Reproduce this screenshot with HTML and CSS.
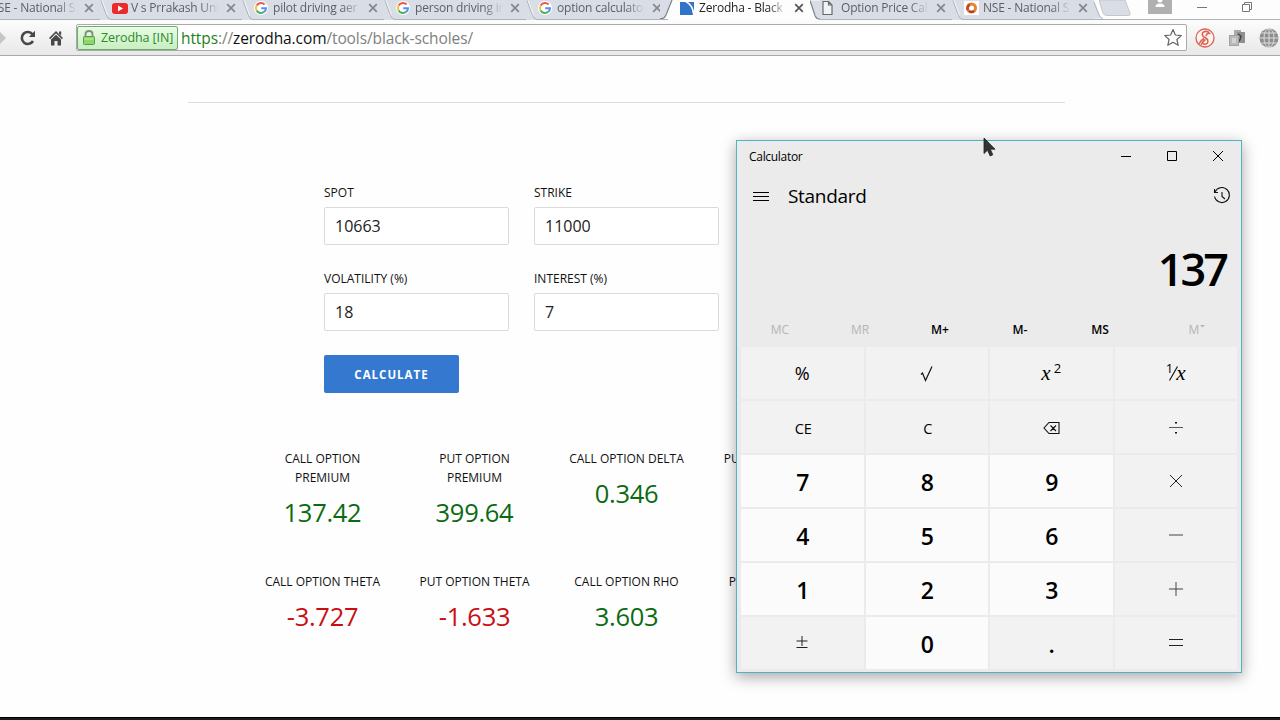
FILE: index.html
```html
<!DOCTYPE html>
<html lang="en">
<head>
    <meta charset="UTF-8">
    <meta name="viewport" content="width=device-width, initial-scale=1.0">
    <title>Zerodha - Black Scholes</title>
    <link rel="stylesheet" href="styles.css">
</head>
<body>

    <!-- Shared icons -->
    <svg class="sprite" width="0" height="0">
        <symbol id="edge" viewBox="0 0 10 19">
            <path d="M0 0 L6 14 Q8 19 10 19 V0 Z" fill="#d9dde5"/>
            <path d="M1 0 L6.500 15 Q8 18.500 10 18.500" fill="none" stroke="#aeb2b9"/>
            <path d="M2.200 0 L7.500 14.500" fill="none" stroke="#f3f4f6"/>
        </symbol>
        <symbol id="cross" viewBox="0 0 10 10">
            <path d="M1.200 1.200 L8.800 8.800 M8.800 1.200 L1.200 8.800" fill="none" stroke="currentColor" stroke-width="1.700"/>
        </symbol>
        <symbol id="google" viewBox="0 0 14 14">
            <circle cx="7" cy="7" r="7" fill="#fff"/>
            <path d="M2.600 4.500 A5 5 0 0 1 10.600 3.500" fill="none" stroke="#ea5a4b" stroke-width="2"/>
            <path d="M2.600 4.500 A5 5 0 0 0 2.600 9.500" fill="none" stroke="#f6c244" stroke-width="2"/>
            <path d="M2.600 9.500 A5 5 0 0 0 10.200 10.800" fill="none" stroke="#4cae62" stroke-width="2"/>
            <path d="M10.200 10.800 Q12 9.300 12 7.200 H7.200" fill="none" stroke="#5a8ff0" stroke-width="2"/>
        </symbol>
    </svg>

    <!-- Tabs -->
    <div class="tabs">
        <div class="tab first">
            <svg class="edge"><use href="#edge"/></svg>
            <span class="favicon"></span>
            <span class="title">NSE - National S</span>
            <svg class="close"><use href="#cross"/></svg>
        </div>
        <div class="tab">
            <svg class="edge"><use href="#edge"/></svg>
            <svg class="favicon" viewBox="0 0 16 14"><rect y="2" width="16" height="11" rx="3" fill="#ec2a2c"/><path d="M6 4.500 L11 7.500 L6 10.500 Z" fill="#fff"/></svg>
            <span class="title">V s Prrakash Uni</span>
            <svg class="close"><use href="#cross"/></svg>
        </div>
        <div class="tab">
            <svg class="edge"><use href="#edge"/></svg>
            <svg class="favicon google"><use href="#google"/></svg>
            <span class="title">pilot driving aer</span>
            <svg class="close"><use href="#cross"/></svg>
        </div>
        <div class="tab">
            <svg class="edge"><use href="#edge"/></svg>
            <svg class="favicon google"><use href="#google"/></svg>
            <span class="title">person driving in</span>
            <svg class="close"><use href="#cross"/></svg>
        </div>
        <div class="tab">
            <svg class="edge"><use href="#edge"/></svg>
            <svg class="favicon google"><use href="#google"/></svg>
            <span class="title">option calculato</span>
            <svg class="close"><use href="#cross"/></svg>
        </div>
        <div class="tab active">
            <svg class="edge" viewBox="0 0 10 19"></svg>
            <svg class="favicon" viewBox="0 0 16 14"><path d="M0 1 H5 Q12 4 13 14 H0 Z" fill="#2f74c9"/><path d="M8 1 H14 V10 Q12.500 4 8 1 Z" fill="#2f74c9"/></svg>
            <span class="title">Zerodha - Black</span>
            <svg class="close"><use href="#cross"/></svg>
            <svg class="slant" width="13" height="19"><path d="M0 0 H12 L6 15 Q4.500 18.500 2 18.500 H0 Z" fill="#d9dde5"/><path d="M12 0 H13 V19 H0 V18.500 H2 Q4.500 18.500 6 15 Z" fill="#fdfdfd"/><path d="M0 18.500 H2 Q4.500 18.500 6 15 L12 0" fill="none" stroke="#7d8188" stroke-width="1.200"/></svg>
        </div>
        <div class="tab after">
            <svg class="edge" viewBox="0 0 10 19"><path d="M0 0 L6 16 Q7 19 10 19 V0 Z" fill="#d9dde5"/><path d="M0 0 L5 15 Q6.500 18.500 9 18.500 H10" fill="none" stroke="#7d8188" stroke-width="1.200"/></svg>
            <svg class="favicon" viewBox="0 0 16 14"><path d="M1 .5 H6.500 L10 4 V13.500 H1 Z M6.500 .5 V4 H10" fill="#f2f3f5" stroke="#686b70" stroke-width="1.200"/></svg>
            <span class="title">Option Price Cal</span>
            <svg class="close"><use href="#cross"/></svg>
        </div>
        <div class="tab">
            <svg class="edge"><use href="#edge"/></svg>
            <svg class="favicon" viewBox="0 0 16 14"><path d="M0 0 H15 V14 H0 Z" fill="#fff"/><circle cx="7.500" cy="7" r="4" fill="none" stroke="#e9842c" stroke-width="3"/><path d="M4 9 A4 4 0 0 1 6 3.500" fill="none" stroke="#c1443c" stroke-width="2.500"/><path d="M5 10 A4 4 0 0 0 10 10" fill="none" stroke="#9b3b55" stroke-width="2"/></svg>
            <span class="title">NSE - National S</span>
            <svg class="close"><use href="#cross"/></svg>
        </div>
        <svg class="last-edge" width="10" height="19"><path d="M0 0 L6 16 Q7 18.500 9 18.500 H0 Z" fill="#d9dde5"/><path d="M-1 0 L5 15 Q6.500 18.500 9 18.500" fill="none" stroke="#b2b5ba"/></svg>
        <svg class="new-tab" width="34" height="19"><path d="M0 0 H26 L31 13 Q32 15.500 29 15.500 H8 Q5 15.500 4 13 Z" fill="#d9dde5" stroke="#c3c6cb"/></svg>
        <div class="window-buttons">
            <svg width="24" height="14"><path d="M0 0 H24 V14 H0 Z" fill="#b0b0b0"/><circle cx="12" cy="0" r="2.500" fill="#fff"/><path d="M7.500 7 Q7.500 3.500 12 3.500 Q16.500 3.500 16.500 7 Z" fill="#fff"/></svg>
            <svg width="10" height="14"><path d="M0 7.500 H10" stroke="#777"/></svg>
            <svg width="11" height="14"><path d="M.5 4.500 H7.500 V11.500 H.5 Z M2.500 4.500 V2.500 H9.500 V9.500 H7.500" fill="none" stroke="#777"/></svg>
        </div>
    </div>

    <!-- Address bar -->
    <div class="toolbar">
        <svg class="forward" width="6" height="14"><path d="M0 1 L6 7 L0 13 Z" fill="#c6c6c6"/></svg>
        <svg class="reload" width="16" height="16" viewBox="0 0 16 16"><path d="M13 11 A6 6 0 1 1 12.500 4.200" fill="none" stroke="#484848" stroke-width="2.600"/><path d="M15 .8 V7 H8.800 Z" fill="#484848"/></svg>
        <svg class="home" width="16" height="16" viewBox="0 0 16 16"><path d="M8 1 L15 8 L13.900 9.200 L8 3.300 L2.100 9.200 L1 8 Z M11 1.500 H13.200 V5.500 L11 3.500 Z" fill="#484848"/><path d="M3 9.600 L8 4.700 L13 9.600 V15.500 H9.500 V11 H6.500 V15.500 H3 Z" fill="#484848"/></svg>
        <div class="omnibox">
            <div class="secure">
                <svg width="12" height="15" viewBox="0 0 12 15"><path d="M2.500 7 V4 Q2.500 1 6 1 Q9.500 1 9.500 4 V7" fill="none" stroke="#888" stroke-width="1.800"/><rect x=".5" y="6.500" width="11" height="8" rx="1" fill="#8ed66b" stroke="#50a047"/><path d="M1.500 9 H10.500" stroke="#c4efb0"/></svg>
                <span>Zerodha [IN]</span>
            </div>
            <span class="url"><span class="https">https</span>://<span class="host">zerodha.com</span>/tools/black-scholes/</span>
            <svg class="star" width="20" height="19" viewBox="0 0 20 19"><path d="M10 1.500 L12.400 7 L18.300 7.600 L13.900 11.500 L15.200 17.300 L10 14.300 L4.800 17.300 L6.100 11.500 L1.700 7.600 L7.600 7 Z" fill="#fff" stroke="#666" stroke-width="1.200" stroke-linejoin="round"/></svg>
        </div>
        <svg class="ext" width="20" height="20" viewBox="0 0 20 20"><circle cx="10" cy="10" r="9" fill="#fff4f2" stroke="#dc6152" stroke-width="1.300"/><path d="M14 4.500 Q10 2 7.500 5 Q6.500 8 10 9.500 Q14 11.500 12.500 15 Q10 17.500 7.500 15 M15.500 5.500 Q12 4.500 11 8 M9 10.500 Q6 12 4 16 M10.500 11.500 Q8 13 6 17" fill="none" stroke="#dc6152" stroke-width="1.500"/></svg>
        <svg class="ext" width="18" height="18" viewBox="0 0 18 18"><rect x="6" y="1" width="7" height="10" fill="#aaa"/><rect x="9" y="3" width="8" height="11" fill="#909090"/><path d="M10 5 L13 7 Q12 13 9 14" fill="none" stroke="#444" stroke-width="1.500"/><rect x="1.500" y="6.500" width="9" height="10" fill="#b9b9b9" stroke="#a2a2a2"/><rect x="4" y="9" width="4" height="5" fill="#d2d2d2"/></svg>
        <svg class="ext" width="20" height="20" viewBox="0 0 20 20"><circle cx="10" cy="10" r="9.500" fill="#8e8e8e"/><path d="M10 .5 V19.500 M.5 10 H19.500 M2.500 5 H17.500 M2.500 15 H17.500" stroke="#ddd"/><ellipse cx="10" cy="10" rx="5" ry="9.500" fill="none" stroke="#ddd"/></svg>
    </div>

    <!-- Page content -->
    <main class="page">
        <hr>
        <form class="form">
            <div class="field">
                <label for="spot">Spot</label>
                <input id="spot" type="text" value="10663">
            </div>
            <div class="field">
                <label for="strike">Strike</label>
                <input id="strike" type="text" value="11000">
            </div>
            <div class="field">
                <label for="volatility">Volatility (%)</label>
                <input id="volatility" type="text" value="18">
            </div>
            <div class="field">
                <label for="interest">Interest (%)</label>
                <input id="interest" type="text" value="7">
            </div>
            <button type="button" class="calculate">Calculate</button>
        </form>

        <div class="results">
            <div class="result"><h4>Call option premium</h4><p class="up">137.42</p></div>
            <div class="result"><h4>Put option premium</h4><p class="up">399.64</p></div>
            <div class="result"><h4>Call option delta</h4><p class="up">0.346</p></div>
            <div class="result"><h4>Put option delta</h4></div>
            <div class="result"><h4>Call option theta</h4><p class="down">-3.727</p></div>
            <div class="result"><h4>Put option theta</h4><p class="down">-1.633</p></div>
            <div class="result"><h4>Call option rho</h4><p class="up">3.603</p></div>
            <div class="result"><h4>Put option rho</h4></div>
        </div>
    </main>
    <div class="taskbar"></div>

    <!-- Calculator window -->
    <section class="calculator">
        <div class="titlebar">
            <span>Calculator</span>
            <svg width="12" height="12"><path d="M1 5.500 H11" stroke="#000"/></svg>
            <svg width="12" height="12"><path d="M1.500 .5 H10.500 V9.500 H1.500 Z" fill="none" stroke="#000"/></svg>
            <svg width="12" height="12"><path d="M1 0 L11 10 M11 0 L1 10" stroke="#000"/></svg>
        </div>
        <div class="mode">
            <svg width="16" height="12"><path d="M0 2.500 H16 M0 6.500 H16 M0 10.500 H16" stroke="#000"/></svg>
            <span>Standard</span>
            <svg class="history" width="18" height="18" viewBox="0 0 18 18"><path d="M2 5 A7.500 7.500 0 1 1 1.500 9.500 M1.500 2 V5.500 H5 M9 5 V9.500 L12 12" fill="none" stroke="#111" stroke-width="1.100"/></svg>
        </div>
        <div class="display">137</div>
        <div class="memory">
            <span class="off">MC</span>
            <span class="off">MR</span>
            <span>M+</span>
            <span>M-</span>
            <span>MS</span>
            <span class="off">M<svg width="5" height="3"><path d="M0 0 H5 L2.500 2.500 Z" fill="#b5b5b5"/></svg></span>
        </div>
        <div class="keys">
            <button class="percent">%</button>
            <button class="root"><svg width="14" height="18"><path d="M1 9.500 L2.500 8 L5.500 15.500 L12 1.500" fill="none" stroke="#111" stroke-width="1.200"/></svg></button>
            <button class="math"><i>x</i><sup>2</sup></button>
            <button class="math inverse"><sup>1</sup><svg width="9" height="15"><path d="M.5 14.500 L8.500 .5" stroke="#111" stroke-width="1.200"/></svg><i>x</i></button>
            <button class="clear">CE</button>
            <button class="clear">C</button>
            <button><svg width="18" height="14"><path d="M7 1.500 H17 V12.500 H7 L2 7 Z M8.500 4.500 L14 10 M14 4.500 L8.500 10" fill="none" stroke="#111" stroke-width="1.100"/></svg></button>
            <button><svg width="16" height="16"><path d="M1 7.500 H15" stroke="#555"/><path d="M7 2 H9 V3.500 H7 Z M7 12 H9 V13.500 H7 Z" fill="#111"/></svg></button>
            <button class="num">7</button>
            <button class="num">8</button>
            <button class="num">9</button>
            <button><svg width="16" height="16"><path d="M2 1 L14 13 M14 1 L2 13" stroke="#222"/></svg></button>
            <button class="num">4</button>
            <button class="num">5</button>
            <button class="num">6</button>
            <button><svg width="16" height="16"><path d="M1 7 H15" stroke="#444"/></svg></button>
            <button class="num">1</button>
            <button class="num">2</button>
            <button class="num">3</button>
            <button><svg width="16" height="16"><path d="M1 7 H15 M8 0 V14" stroke="#444"/></svg></button>
            <button><svg width="14" height="16"><path d="M1.500 5 H12.500 M7 0 V10 M1.500 11.500 H12.500" stroke="#222"/></svg></button>
            <button class="num">0</button>
            <button class="dot">.</button>
            <button><svg width="16" height="16"><path d="M1 3.500 H15 M1 9.500 H15" stroke="#222"/></svg></button>
        </div>
    </section>

    <svg class="pointer" width="13" height="20"><path d="M1 1 V16.500 L4.500 13.200 L7.200 19 L9.800 17.800 L7.300 12.200 H12 Z" fill="#333" stroke="#222" stroke-width=".8"/></svg>

</body>
</html>
```

FILE: styles.css
```css
* {
    box-sizing: border-box;
}

body {
    margin: 0;
    width: 1280px;
    height: 720px;
    overflow: hidden;
    display: flex;
    flex-direction: column;
    background-color: #fefefe;
    color: #111;
    font-family: "Open Sans", "Noto Sans", sans-serif;
}

svg {
    display: block;
    flex: none;
}

.sprite {
    position: absolute;
}

/* Tabs */
.tabs {
    display: flex;
    flex: none;
    height: 20px;
    overflow: hidden;
    background: linear-gradient(#aeb2b9, #aeb2b9) bottom / 100% 1px no-repeat #fdfdfd;
}

.tab {
    display: flex;
    flex: none;
    width: 142px;
    height: 20px;
    background-color: #d9dde5;
    box-shadow: inset 0 -1px #aeb2b9;
    color: #5c5f64;
    font-size: 12px;
}

.tab.first {
    margin-left: -42px;
}

.tab.active {
    position: relative;
    background-color: #fdfdfd;
    box-shadow: none;
    color: #222;
}

.tab .edge {
    width: 10px;
    height: 20px;
    margin-right: 2px;
    background-color: #d9dde5;
}

.tab.active .edge,
.tab.after .edge {
    background-color: #fdfdfd;
}

/* left side of the active tab lies over its neighbour */
.tab .slant {
    position: absolute;
    left: -8px;
    top: 0;
}

.tab .favicon {
    flex: none;
    width: 16px;
    height: 14px;
    margin: 1px 3px 0 0;
}

.tab .favicon.google {
    margin: 1px 4px 0 -1px;
}

.tab .title {
    width: 88px;
    height: 18px;
    line-height: 16px;
    letter-spacing: -0.2px;
    white-space: nowrap;
    -webkit-mask-image: linear-gradient(to right, #000 78%, transparent 100%);
    mask-image: linear-gradient(to right, #000 78%, transparent 100%);
}

.tab .close {
    width: 10px;
    height: 10px;
    margin: 3px 0 0 7px;
    color: #85888e;
}

.tab.active .close {
    color: #555;
}

.new-tab {
    margin-left: -5px;
}

.window-buttons {
    display: flex;
    margin-left: auto;
    margin-right: 27px;
    gap: 25px;
}

.window-buttons svg:last-child {
    margin-left: 10px;
}

/* Address bar */
.toolbar {
    display: flex;
    flex: none;
    align-items: center;
    height: 36px;
    overflow: hidden;
    background: linear-gradient(#fcfcfc, #e8e8e8);
    border-bottom: 1px solid #a9a9a9;
}

.reload {
    margin-left: 14px;
}

.home {
    margin-left: 12px;
}

.omnibox {
    display: flex;
    flex: none;
    align-items: center;
    width: 1111px;
    height: 27px;
    margin: 0 8px 0 12px;
    background-color: #fff;
    border: 1px solid #aaa;
    border-radius: 2px;
}

.secure {
    display: flex;
    align-items: center;
    gap: 6px;
    width: 101px;
    height: 24px;
    padding-left: 5px;
    background: linear-gradient(#e8fbe4, #c8efc1);
    border: 1px solid #71ab6d;
    border-radius: 2px;
    color: #2c8a2c;
    font-size: 12.500px;
    letter-spacing: -0.1px;
    white-space: nowrap;
}

.url {
    margin-left: 3px;
    color: #808080;
    font-size: 15.500px;
    letter-spacing: -0.1px;
    white-space: nowrap;
}

.url .https {
    color: #1c811c;
}

.url .host {
    color: #111;
}

.star {
    margin-left: auto;
    margin-right: 3px;
}

.ext {
    margin-right: 13px;
}

/* Page */
.page {
    flex: 1;
    overflow: hidden;
}

.page hr {
    width: 877px;
    margin: 46px 0 0 188px;
    border: 0;
    border-top: 1px solid #ddd;
}

.form {
    display: grid;
    grid-template-columns: 185px 185px;
    column-gap: 25px;
    margin: 79px 0 0 324px;
}

.field {
    height: 86px;
}

.field label {
    display: block;
    height: 25px;
    line-height: 22px;
    font-size: 12px;
    text-transform: uppercase;
}

.field input {
    display: block;
    width: 185px;
    height: 38px;
    padding: 0 10px;
    background-color: #fff;
    border: 1px solid #dadada;
    border-radius: 2px;
    color: #222;
    font: 16px "Open Sans", sans-serif;
}

.calculate {
    width: 135px;
    height: 38px;
    margin-top: 1px;
    padding: 0;
    background-color: #3479cf;
    border: 0;
    border-radius: 2px;
    color: #fff;
    font: bold 11.500px "Open Sans", sans-serif;
    letter-spacing: 1px;
    text-transform: uppercase;
}

.results {
    display: grid;
    grid-template-columns: repeat(4, 152px);
    grid-template-rows: 123px 90px;
    margin: 56px 0 0 246px;
}

.result {
    padding: 0 13px 0 14px;
    text-align: center;
}

.result h4 {
    margin: 0;
    font-size: 12px;
    font-weight: normal;
    line-height: 19px;
    text-transform: uppercase;
}

.result p {
    margin: 7px 0 0;
    font-size: 25.500px;
    line-height: 36px;
    letter-spacing: -0.3px;
}

.up {
    color: #0a6b12;
}

.down {
    color: #c90d12;
}

.taskbar {
    flex: none;
    height: 3px;
    background-color: #1c1c1c;
    border-top: 1px solid #000;
}

/* Calculator */
.calculator {
    position: absolute;
    left: 736px;
    top: 140px;
    width: 506px;
    height: 533px;
    background-color: #ebebeb;
    border: 1px solid #4fb3c3;
    box-shadow: 0 4px 14px rgba(0, 0, 0, 0.35);
    color: #000;
}

.titlebar {
    display: flex;
    align-items: center;
    height: 31px;
    padding: 0 17px 0 12px;
    font-size: 12px;
    letter-spacing: -0.3px;
}

.titlebar span {
    margin-right: auto;
}

.titlebar svg {
    margin-left: 34px;
}

.mode {
    display: flex;
    align-items: center;
    height: 48px;
    padding: 0 10px 0 16px;
    font-size: 19px;
    letter-spacing: -0.3px;
}

.mode span {
    margin-left: 19px;
}

.mode .history {
    margin-left: auto;
}

.display {
    height: 96px;
    padding-right: 15px;
    font-size: 45px;
    font-weight: 600;
    line-height: 98px;
    letter-spacing: -3px;
    text-align: right;
}

.memory {
    display: flex;
    height: 31px;
    padding: 0 4px 0 3px;
    font-size: 12px;
    font-weight: 600;
    line-height: 27px;
}

.memory span {
    width: 80px;
    text-align: center;
}

.memory .off {
    color: #b5b5b5;
    font-weight: normal;
}

.memory span:last-child {
    display: flex;
    justify-content: center;
    margin-left: auto;
}

.memory span svg {
    margin: 9px 0 0 1px;
}

.keys {
    display: grid;
    grid-template-columns: repeat(4, 1fr);
    grid-template-rows: repeat(6, 52px);
    gap: 2px;
    padding: 0 4px;
}

.keys button {
    display: flex;
    align-items: center;
    justify-content: center;
    padding: 1px 0 0;
    background-color: #f2f2f2;
    border: 0;
    color: #000;
    font: 14.500px "Open Sans", sans-serif;
}

.keys .num,
.keys .dot {
    font-size: 23px;
    font-weight: 600;
    padding-left: 1px;
}

.keys .num {
    background-color: #fbfbfb;
}

.keys .clear {
    padding: 3px 0 0 2px;
}

.keys .percent {
    padding-top: 0;
    font-size: 18px;
}

.keys .math i {
    font: italic 21px "Liberation Serif", serif;
}

.keys .math sup {
    margin: -10px 0 0 3px;
    font-size: 13px;
    line-height: 1;
}

.keys .inverse sup {
    margin-left: 0;
    margin-right: -4px;
}

.keys .inverse i {
    margin-left: -2px;
}

/* Mouse pointer */
.pointer {
    position: absolute;
    left: 983px;
    top: 137px;
}
```
